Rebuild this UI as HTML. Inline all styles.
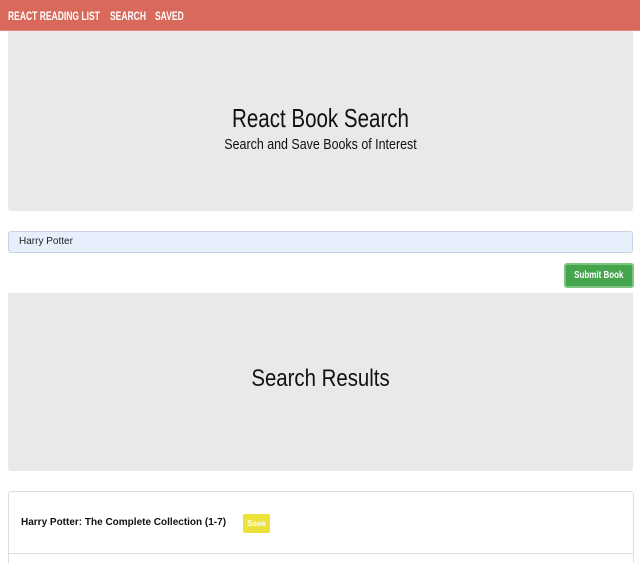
<!DOCTYPE html>
<html><head><style>
*{box-sizing:border-box;margin:0;padding:0}
html,body{width:640px;height:563px;overflow:hidden}
body{background:#fff;font-family:"Liberation Sans",sans-serif;position:relative}
.nav{position:absolute;left:0;top:0;width:640px;height:31px;background:#d8695b;border-bottom:1px solid #e2887c;color:#fff;font-weight:bold;font-size:12px}
.nav span{position:absolute;top:9px;line-height:14px;transform:scaleX(0.71);transform-origin:0 0;white-space:nowrap}
.jumbo{position:absolute;left:8px;width:625px;background:#e9e9e9;border-radius:0 0 3px 3px;text-align:center;color:#111}
.jumbo div{white-space:nowrap}
.in{position:absolute;left:8px;top:231px;width:625px;height:22px;background:#e8effc;border:1px solid #c9d2e2;border-radius:3px;font-size:10px;line-height:20px;padding-left:10px;color:#222}
.btn{position:absolute;left:564px;top:263px;width:70px;height:25px;background:#45a54c;border:2px solid #7cc47f;border-radius:3px;color:#fff;font-weight:bold;font-size:10px;line-height:21px;text-align:center}
.btn span{display:inline-block;transform:scaleX(0.8)}
.card{position:absolute;left:8px;top:491px;width:626px;height:100px;border:1px solid #ddd;border-radius:3px}
.card .div{position:absolute;left:0;top:61px;width:100%;border-top:1px solid #ddd}
.t{position:absolute;left:12px;top:25px;font-size:10px;font-weight:bold;color:#111}
.save{position:absolute;left:234px;top:22px;width:27px;height:19px;background:#ece33a;border-radius:2px;color:#fff;font-size:8px;font-weight:bold;text-align:center;line-height:19px}
</style></head><body>
<div class="nav"><span style="left:8px">REACT READING LIST</span><span style="left:110px">SEARCH</span><span style="left:155px">SAVED</span></div>
<div class="jumbo" style="top:31px;height:180px"><div style="font-size:26px;margin-top:72px;line-height:30px;transform:scaleX(0.79)">React Book Search</div><div style="font-size:15px;margin-top:3px;transform:scaleX(0.83)">Search and Save Books of Interest</div></div>
<div class="in">Harry Potter</div>
<div class="btn"><span>Submit Book</span></div>
<div class="jumbo" style="top:293px;height:178px"><div style="font-size:24px;margin-top:72px;line-height:28px;transform:scaleX(0.85)">Search Results</div></div>
<div class="card"><div class="t">Harry Potter: The Complete Collection (1-7)</div><div class="save">Save</div><div class="div"></div></div>
</body></html>
